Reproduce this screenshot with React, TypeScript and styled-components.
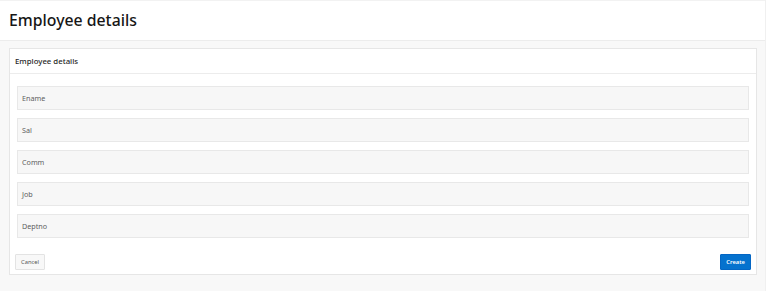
import React from 'react'
import styled, { createGlobalStyle } from 'styled-components'

const GlobalStyle = createGlobalStyle`
  html, body {
    margin: 0;
    padding: 0;
    background: #ffffff;
    font-family: "Noto Sans", "Open Sans", Arial, sans-serif;
    color: #262626;
  }
`

const Page = styled.div`
  width: 766px;
  min-height: 291px;
  background: #f8f8f8;
  border-right: 1px solid #f0f0f0;
  box-sizing: border-box;
`

const TitleBar = styled.header`
  height: 41px;
  background: #ffffff;
  border-top: 1px solid #f2f2f2;
  border-bottom: 1px solid #ececec;
  box-sizing: border-box;
  display: flex;
  align-items: center;
  padding: 0 9px 1px;
`

const Title = styled.h1`
  margin: 0;
  font-size: 15.8px;
  font-weight: 500;
  color: #161616;
`

const Body = styled.main`
  padding: 7px 9px 16px;
`

const Card = styled.section`
  width: 748px;
  background: #ffffff;
  border: 1px solid #e6e6e6;
  box-sizing: border-box;
`

const CardHeader = styled.div`
  height: 24px;
  border-bottom: 1px solid #ececec;
  display: flex;
  align-items: center;
  padding: 0 5px;
  font-size: 7.8px;
  font-weight: 500;
  color: #262626;
`

const Fields = styled.div`
  display: flex;
  flex-direction: column;
  gap: 8px;
  padding: 12px 7px 0 7px;
`

const Field = styled.div`
  height: 24px;
  background: #f7f7f7;
  border: 1px solid #e8e8e8;
  box-sizing: border-box;
  display: flex;
  align-items: center;
  padding: 0 4px;
  font-size: 7.2px;
  color: #606060;
`

const Actions = styled.div`
  display: flex;
  justify-content: space-between;
  align-items: center;
  padding: 16px 5px 4px 5px;
`

const Button = styled.button<{ $primary?: boolean }>`
  height: 16px;
  padding: 0 5px;
  font-family: inherit;
  font-size: 5.8px;
  font-weight: ${p => (p.$primary ? 600 : 400)};
  border-radius: 1px;
  border: 1px solid ${p => (p.$primary ? '#0466c4' : '#e3e3e3')};
  background: ${p => (p.$primary ? '#0572ce' : '#f8f8f8')};
  color: ${p => (p.$primary ? '#ffffff' : '#555555')};
  cursor: pointer;
`

const fields = ['Ename', 'Sal', 'Comm', 'Job', 'Deptno']

export default function App() {
  return (
    <>
      <GlobalStyle />
      <Page>
        <TitleBar>
          <Title>Employee details</Title>
        </TitleBar>
        <Body>
          <Card>
            <CardHeader>Employee details</CardHeader>
            <Fields>
              {fields.map(f => (
                <Field key={f}>{f}</Field>
              ))}
            </Fields>
            <Actions>
              <Button>Cancel</Button>
              <Button $primary>Create</Button>
            </Actions>
          </Card>
        </Body>
      </Page>
    </>
  )
}
